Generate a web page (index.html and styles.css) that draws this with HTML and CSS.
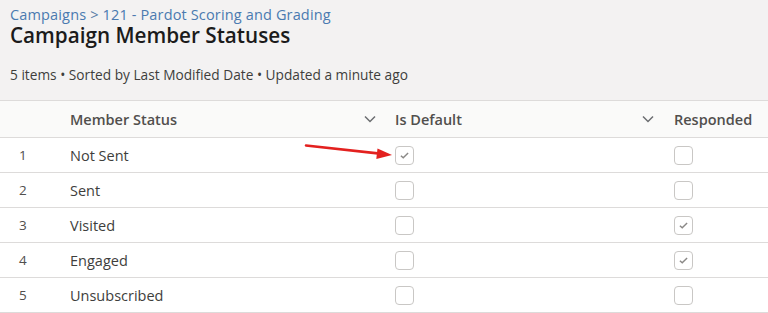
FILE: index.html
```html
<!DOCTYPE html>
<html lang="en">
<head>
<meta charset="utf-8">
<title>Campaign Member Statuses</title>
<link rel="stylesheet" href="styles.css">
</head>
<body>
<div class="page">
  <header class="page-header">
    <div class="breadcrumb"><a href="#">Campaigns</a> &gt; <a href="#">121 - Pardot Scoring and Grading</a></div>
    <h1 class="title">Campaign Member Statuses</h1>
    <div class="meta">5 items • Sorted by Last Modified Date • Updated a minute ago</div>
  </header>
  <div class="table">
    <div class="row head">
      <div class="cell num"></div>
      <div class="cell col-name"><span>Member Status</span><svg class="chev" viewBox="0 0 12 8"><path d="M1 1.5 L6 6.5 L11 1.5"/></svg></div>
      <div class="cell col-def"><span>Is Default</span><svg class="chev" viewBox="0 0 12 8"><path d="M1 1.5 L6 6.5 L11 1.5"/></svg></div>
      <div class="cell col-resp"><span>Responded</span></div>
    </div>
    <div class="row">
      <div class="cell num">1</div>
      <div class="cell col-name">Not Sent</div>
      <div class="cell col-def"><span class="cb checked"><svg viewBox="0 0 12 10"><path d="M2 5.2 L4.6 7.6 L10 2.2"/></svg></span></div>
      <div class="cell col-resp"><span class="cb"></span></div>
    </div>
    <div class="row">
      <div class="cell num">2</div>
      <div class="cell col-name">Sent</div>
      <div class="cell col-def"><span class="cb"></span></div>
      <div class="cell col-resp"><span class="cb"></span></div>
    </div>
    <div class="row">
      <div class="cell num">3</div>
      <div class="cell col-name">Visited</div>
      <div class="cell col-def"><span class="cb"></span></div>
      <div class="cell col-resp"><span class="cb checked"><svg viewBox="0 0 12 10"><path d="M2 5.2 L4.6 7.6 L10 2.2"/></svg></span></div>
    </div>
    <div class="row">
      <div class="cell num">4</div>
      <div class="cell col-name">Engaged</div>
      <div class="cell col-def"><span class="cb"></span></div>
      <div class="cell col-resp"><span class="cb checked"><svg viewBox="0 0 12 10"><path d="M2 5.2 L4.6 7.6 L10 2.2"/></svg></span></div>
    </div>
    <div class="row">
      <div class="cell num">5</div>
      <div class="cell col-name">Unsubscribed</div>
      <div class="cell col-def"><span class="cb"></span></div>
      <div class="cell col-resp"><span class="cb"></span></div>
    </div>
  </div>
  <svg class="arrow" viewBox="0 0 90 16" width="90" height="16">
    <path class="shaft" d="M2 2.5 L76 10.6"/>
    <path class="head" d="M88 12 L73.5 5.5 L72.3 16 Z"/>
  </svg>
</div>
</body>
</html>
```

FILE: styles.css
```css
html, body {
  margin: 0;
  padding: 0;
  background: #ffffff;
}

body {
  font-family: "Open Sans", "Noto Sans", "Liberation Sans", sans-serif;
  color: #3e3e3c;
  width: 768px;
  height: 313px;
  overflow: hidden;
}

.page {
  position: relative;
}

.page-header {
  box-sizing: border-box;
  height: 101px;
  background: #f3f2f2;
  border-bottom: 1px solid #dddbda;
  padding: 6px 10px 0;
}

.breadcrumb {
  font-size: 14.5px;
  line-height: 18px;
  letter-spacing: 0.15px;
  color: #5a7fa8;
}

.breadcrumb a {
  color: #4a7ab0;
  text-decoration: none;
}

.title {
  margin: 0;
  font-size: 20.7px;
  line-height: 22px;
  font-weight: 600;
  color: #1b1b1b;
}

.meta {
  margin-top: 20px;
  font-size: 13.7px;
  line-height: 18px;
  color: #3e3e3c;
}

.row {
  display: grid;
  grid-template-columns: 60px 325px 278px 1fr;
  height: 35px;
  box-sizing: border-box;
  border-bottom: 1px solid #dddbda;
  align-items: center;
  font-size: 14.5px;
  color: #3e3e3c;
}

.row.head {
  height: 37px;
  background: #fafaf9;
  font-weight: 600;
  color: #514f4d;
}

.cell {
  display: flex;
  align-items: center;
  height: 100%;
  box-sizing: border-box;
  padding-left: 10px;
}

.cell.num {
  padding-left: 19px;
  color: #514f4d;
  font-size: 13.5px;
}

.col-resp {
  padding-left: 11px;
}

.head .cell {
  justify-content: space-between;
  padding-right: 9px;
}

.head .col-resp {
  justify-content: flex-start;
}

.chev {
  width: 12px;
  height: 8px;
  fill: none;
  stroke: #6b6d70;
  stroke-width: 1.5;
}

.cb {
  display: inline-flex;
  align-items: center;
  justify-content: center;
  width: 19px;
  height: 19px;
  box-sizing: border-box;
  border: 1px solid #c9c7c5;
  border-radius: 4px;
  background: #ffffff;
}

.cb svg {
  width: 11px;
  height: 9px;
  fill: none;
  stroke: #8a8886;
  stroke-width: 1.6;
}

.arrow {
  position: absolute;
  left: 304px;
  top: 143px;
  overflow: visible;
}

.arrow .shaft {
  fill: none;
  stroke: #e3211f;
  stroke-width: 2.6;
  stroke-linecap: round;
}

.arrow .head {
  fill: #e3211f;
}
```
